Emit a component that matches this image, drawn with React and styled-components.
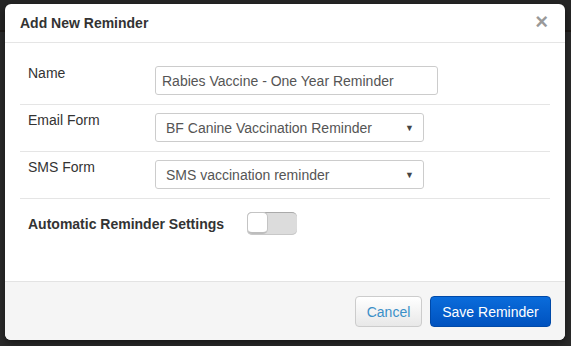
import React from "react";
import styled, { createGlobalStyle } from "styled-components";

const Global = createGlobalStyle`
  html, body { margin: 0; padding: 0; background: #2b2b2b; }
  body { font-family: "Liberation Sans", Arial, sans-serif; }
  * { box-sizing: border-box; }
`;

const Page = styled.div`
  width: 571px;
  height: 346px;
  padding: 4px 6px 0 5px;
  background: linear-gradient(#262626 0 30px, #1f1a17 30px 32px, #2b2b2b 32px);
`;

const Modal = styled.div`
  width: 560px;
  height: 336px;
  background: #fff;
  border-radius: 6px;
  overflow: hidden;
  display: flex;
  flex-direction: column;
  box-shadow: 0 3px 9px rgba(0, 0, 0, 0.5);
`;

const Header = styled.div`
  height: 39px;
  flex: none;
  padding: 0 17px 0 15px;
  border-bottom: 1px solid #e5e5e5;
  display: flex;
  align-items: center;
  justify-content: space-between;
`;

const Title = styled.h4`
  margin: 0;
  font-size: 14px;
  font-weight: bold;
  color: #333;
`;

const Close = styled.button`
  border: 0;
  background: none;
  padding: 0;
  font-family: "Liberation Sans", Arial, sans-serif;
  font-size: 22px;
  line-height: 1;
  font-weight: bold;
  color: #000;
  opacity: 0.4;
  margin-top: -2px;
`;

const Body = styled.div`
  flex: 1;
  padding: 15px 15px 0 15px;
`;

const Row = styled.div`
  display: flex;
  align-items: flex-start;
  padding: 8px 0 9px 8px;
  border-bottom: 1px solid #e5e5e5;
`;

const Label = styled.label`
  width: 127px;
  flex: none;
  font-size: 14px;
  line-height: 16px;
  color: #333;
  margin-top: ${(p) => p.$offset}px;
`;

const TextInput = styled.input`
  width: ${(p) => p.$w}px;
  height: 29px;
  padding: 0 6px;
  border: 1px solid #ccc;
  border-radius: 3px;
  font-family: "Liberation Sans", Arial, sans-serif;
  font-size: 14px;
  color: #555;
  outline: none;
`;

const SelectBox = styled.div`
  width: ${(p) => p.$w}px;
  height: 29px;
  padding: 0 9px 0 10px;
  border: 1px solid #ccc;
  border-radius: 3px;
  display: flex;
  align-items: center;
  justify-content: space-between;
  font-size: 14px;
  color: #555;
`;

const Caret = styled.span`
  font-size: 9px;
  color: #444;
  margin-top: 1px;
`;

const ToggleRow = styled.div`
  display: flex;
  align-items: center;
  gap: 23px;
  padding: 13px 0 0 8px;
`;

const BoldLabel = styled.span`
  font-size: 14px;
  font-weight: bold;
  color: #333;
`;

const Toggle = styled.div`
  width: 50px;
  height: 23px;
  border-radius: 5px;
  background: #dcdcdc;
  border-top: 1px solid #aaa;
  box-shadow: inset 0 -1px 0 #c8c8c8;
  position: relative;
`;

const Knob = styled.div`
  position: absolute;
  left: 0;
  top: -1px;
  width: 21px;
  height: 22px;
  background: #fff;
  border: 1px solid #c4c4c4;
  border-bottom: 2px solid #bdbdbd;
  border-radius: 5px;
`;

const Footer = styled.div`
  height: 59px;
  flex: none;
  background: #f5f5f5;
  border-top: 1px solid #e3e3e3;
  display: flex;
  justify-content: flex-end;
  align-items: flex-start;
  gap: 8px;
  padding: 14px 14px 0 0;
`;

const Button = styled.button`
  height: 31px;
  width: ${(p) => p.$w}px;
  padding: 0;
  border-radius: 4px;
  font-family: "Liberation Sans", Arial, sans-serif;
  font-size: 14px;
  border: 1px solid ${(p) => (p.$primary ? "#0049a8" : "#ccc")};
  color: ${(p) => (p.$primary ? "#fff" : "#3a8fc8")};
  background: ${(p) =>
    p.$primary
      ? "linear-gradient(#0a6cdb, #0052bf)"
      : "linear-gradient(#fff, #e8e8e8)"};
`;

export default function App() {
  return (
    <>
      <Global />
      <Page>
        <Modal>
          <Header>
            <Title>Add New Reminder</Title>
            <Close>×</Close>
          </Header>
          <Body>
            <Row>
              <Label $offset={-1}>Name</Label>
              <TextInput $w={283} defaultValue="Rabies Vaccine - One Year Reminder" />
            </Row>
            <Row>
              <Label $offset={-1}>Email Form</Label>
              <SelectBox $w={269}>
                <span>BF Canine Vaccination Reminder</span>
                <Caret>▼</Caret>
              </SelectBox>
            </Row>
            <Row>
              <Label $offset={-1}>SMS Form</Label>
              <SelectBox $w={269}>
                <span>SMS vaccination reminder</span>
                <Caret>▼</Caret>
              </SelectBox>
            </Row>
            <ToggleRow>
              <BoldLabel>Automatic Reminder Settings</BoldLabel>
              <Toggle>
                <Knob />
              </Toggle>
            </ToggleRow>
          </Body>
          <Footer>
            <Button $w={67}>Cancel</Button>
            <Button $w={121} $primary>Save Reminder</Button>
          </Footer>
        </Modal>
      </Page>
    </>
  );
}
